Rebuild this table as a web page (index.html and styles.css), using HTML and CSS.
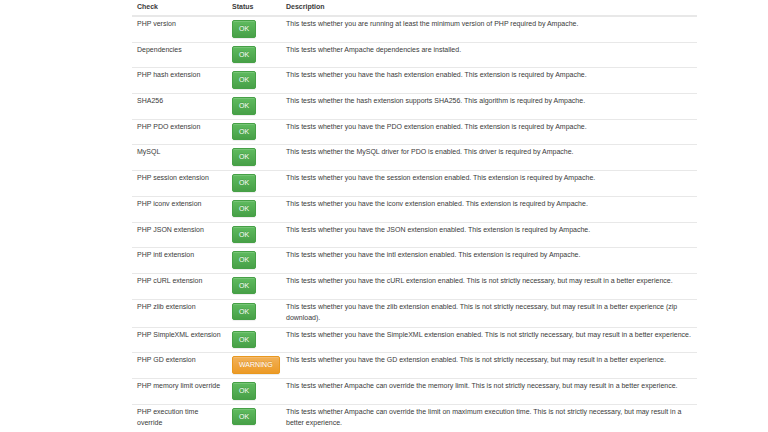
FILE: index.html
```html
<!DOCTYPE html>
<html>
<head>
<meta charset="utf-8">
<link rel="stylesheet" href="styles.css">
</head>
<body>
<table class="checks">
  <thead>
    <tr><th class="c-check">Check</th><th class="c-status">Status</th><th class="c-desc">Description</th></tr>
  </thead>
  <tbody>
    <tr><td>PHP version</td><td><span class="btn ok">OK</span></td><td>This tests whether you are running at least the minimum version of PHP required by Ampache.</td></tr>
    <tr><td>Dependencies</td><td><span class="btn ok">OK</span></td><td>This tests whether Ampache dependencies are installed.</td></tr>
    <tr><td>PHP hash extension</td><td><span class="btn ok">OK</span></td><td>This tests whether you have the hash extension enabled. This extension is required by Ampache.</td></tr>
    <tr><td>SHA256</td><td><span class="btn ok">OK</span></td><td>This tests whether the hash extension supports SHA256. This algorithm is required by Ampache.</td></tr>
    <tr><td>PHP PDO extension</td><td><span class="btn ok">OK</span></td><td>This tests whether you have the PDO extension enabled. This extension is required by Ampache.</td></tr>
    <tr><td>MySQL</td><td><span class="btn ok">OK</span></td><td>This tests whether the MySQL driver for PDO is enabled. This driver is required by Ampache.</td></tr>
    <tr><td>PHP session extension</td><td><span class="btn ok">OK</span></td><td>This tests whether you have the session extension enabled. This extension is required by Ampache.</td></tr>
    <tr><td>PHP iconv extension</td><td><span class="btn ok">OK</span></td><td>This tests whether you have the iconv extension enabled. This extension is required by Ampache.</td></tr>
    <tr><td>PHP JSON extension</td><td><span class="btn ok">OK</span></td><td>This tests whether you have the JSON extension enabled. This extension is required by Ampache.</td></tr>
    <tr><td>PHP intl extension</td><td><span class="btn ok">OK</span></td><td>This tests whether you have the intl extension enabled. This extension is required by Ampache.</td></tr>
    <tr><td>PHP cURL extension</td><td><span class="btn ok">OK</span></td><td>This tests whether you have the cURL extension enabled. This is not strictly necessary, but may result in a better experience.</td></tr>
    <tr><td>PHP zlib extension</td><td><span class="btn ok">OK</span></td><td>This tests whether you have the zlib extension enabled. This is not strictly necessary, but may result in a better experience (zip download).</td></tr>
    <tr><td>PHP SimpleXML extension</td><td><span class="btn ok">OK</span></td><td>This tests whether you have the SimpleXML extension enabled. This is not strictly necessary, but may result in a better experience.</td></tr>
    <tr><td>PHP GD extension</td><td><span class="btn warn">WARNING</span></td><td>This tests whether you have the GD extension enabled. This is not strictly necessary, but may result in a better experience.</td></tr>
    <tr><td>PHP memory limit override</td><td><span class="btn ok">OK</span></td><td>This tests whether Ampache can override the memory limit. This is not strictly necessary, but may result in a better experience.</td></tr>
    <tr><td>PHP execution time override</td><td><span class="btn ok">OK</span></td><td>This tests whether Ampache can override the limit on maximum execution time. This is not strictly necessary, but may result in a better experience.</td></tr>
  </tbody>
</table>
</body>
</html>
```
FILE: styles.css
```css
html, body {
  margin: 0;
  padding: 0;
  background: #ffffff;
}
body {
  font-family: "Liberation Sans", Arial, Helvetica, sans-serif;
  font-size: 7px;
  line-height: 11px;
  color: #3a3a3a;
}
.checks {
  margin-left: 132px;
  width: 565px;
  border-collapse: collapse;
  table-layout: fixed;
}
.c-check { width: 85px; }
.c-status { width: 44px; }
.c-desc { width: auto; }
.checks th {
  text-align: left;
  font-weight: bold;
  padding: 1px 5px 3px;
  border-bottom: 2px solid #e8e8e8;
  vertical-align: bottom;
}
.checks td {
  padding: 1px 5px 4.2px;
  border-bottom: 1px solid #e8e8e8;
  vertical-align: top;
}
.btn {
  display: inline-block;
  vertical-align: top;
  box-sizing: border-box;
  height: 17.5px;
  line-height: 16px;
  margin: 2px 0 0;
  padding: 0 6px;
  font-size: 7px;
  color: #ffffff;
  border-radius: 2px;
  border: 1px solid transparent;
  text-shadow: 0 -1px 0 rgba(0,0,0,0.15);
  box-shadow: inset 0 1px 0 rgba(255,255,255,0.15), 0 1px 1px rgba(0,0,0,0.075);
}
.btn.ok {
  background-image: linear-gradient(to bottom, #5fbb5f 0, #47a047 100%);
  border-color: #46a046;
}
.btn.warn {
  background-image: linear-gradient(to bottom, #f2b158 0, #ec9a26 100%);
  border-color: #e8981f;
}
```
